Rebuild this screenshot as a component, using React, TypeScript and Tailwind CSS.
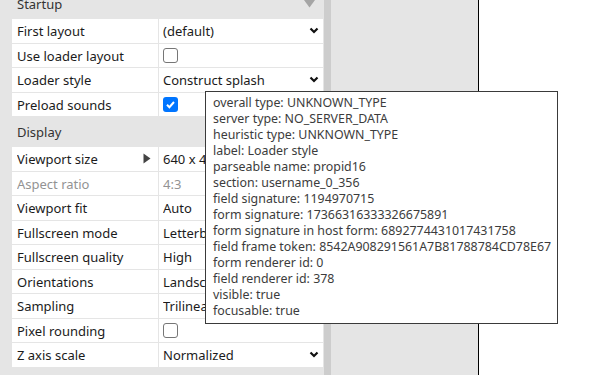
import type { ReactNode } from 'react'

type Row = {
  label: string
  value?: string
  kind?: 'select' | 'check' | 'checked' | 'text' | 'expand'
  muted?: boolean
}

const sections: { title: string; rows: Row[] }[] = [
  {
    title: 'Startup',
    rows: [
      { label: 'First layout', value: '(default)', kind: 'select' },
      { label: 'Use loader layout', kind: 'check' },
      { label: 'Loader style', value: 'Construct splash', kind: 'select' },
      { label: 'Preload sounds', kind: 'checked' },
    ],
  },
  {
    title: 'Display',
    rows: [
      { label: 'Viewport size', value: '640 x 480', kind: 'expand' },
      { label: 'Aspect ratio', value: '4:3', muted: true },
      { label: 'Viewport fit', value: 'Auto', kind: 'select' },
      { label: 'Fullscreen mode', value: 'Letterbox scale', kind: 'select' },
      { label: 'Fullscreen quality', value: 'High', kind: 'select' },
      { label: 'Orientations', value: 'Landscape', kind: 'select' },
      { label: 'Sampling', value: 'Trilinear', kind: 'select' },
      { label: 'Pixel rounding', kind: 'check' },
      { label: 'Z axis scale', value: 'Normalized', kind: 'select' },
    ],
  },
]

const tooltipLines = [
  'overall type: UNKNOWN_TYPE',
  'server type: NO_SERVER_DATA',
  'heuristic type: UNKNOWN_TYPE',
  'label: Loader style',
  'parseable name: propid16',
  'section: username_0_356',
  'field signature: 1194970715',
  'form signature: 17366316333326675891',
  'form signature in host form: 6892774431017431758',
  'field frame token: 8542A908291561A7B81788784CD78E67',
  'form renderer id: 0',
  'field renderer id: 378',
  'visible: true',
  'focusable: true',
]

function Chevron() {
  return (
    <svg width="10" height="7" viewBox="0 0 10 7" className="shrink-0">
      <path d="M1.5 1.5 L5 5 L8.5 1.5" fill="none" stroke="#111" strokeWidth="2.2" />
    </svg>
  )
}

function Checkbox({ checked }: { checked?: boolean }) {
  if (checked) {
    return (
      <div className="w-[15px] h-[15px] rounded-[3px] bg-[#0075ff] flex items-center justify-center">
        <svg width="11" height="11" viewBox="0 0 11 11">
          <path d="M2 5.8 L4.4 8.2 L9 3" fill="none" stroke="#fff" strokeWidth="2" />
        </svg>
      </div>
    )
  }
  return <div className="w-[15px] h-[15px] rounded-[3px] border border-[#767676] bg-white" />
}

function ValueCell({ row }: { row: Row }) {
  let content: ReactNode = null
  if (row.kind === 'check' || row.kind === 'checked') {
    content = <Checkbox checked={row.kind === 'checked'} />
  } else {
    content = (
      <>
        <span className={`flex-1 truncate pt-[2px] ${row.muted ? 'text-[#939393]' : ''}`}>
          {row.value}
        </span>
        {row.kind === 'select' && <Chevron />}
      </>
    )
  }
  return <div className="flex-1 flex items-center pl-[4px] pr-[4px] bg-white">{content}</div>
}

function PropRow({ row }: { row: Row }) {
  return (
    <div className="flex h-[23.5px] mb-px gap-px">
      <div
        className={`w-[146px] flex items-center pl-[5px] pr-[7px] bg-white ${
          row.muted ? 'text-[#939393]' : ''
        }`}
      >
        <span className="flex-1 truncate pt-[2px]">{row.label}</span>
        {row.kind === 'expand' && (
          <svg width="8" height="11" viewBox="0 0 8 11">
            <path d="M0.5 0.5 L7.5 5.5 L0.5 10.5 Z" fill="#444" />
          </svg>
        )}
      </div>
      <ValueCell row={row} />
    </div>
  )
}

export default function App() {
  return (
    <div
      className="relative w-[604px] h-[375px] overflow-hidden bg-white flex text-[13px] text-[#1b1b1b]"
      style={{ fontFamily: '"Noto Sans", "Open Sans", sans-serif' }}
    >
      {/* Properties panel */}
      <div className="w-[479px] h-full shrink-0 bg-[#e5e5e5] border-r border-black flex">
        <div className="w-[324px] h-full overflow-hidden">
          <div className="-mt-[11px] pr-px">
            {sections.map((s) => (
              <div key={s.title}>
                <div className="h-[30px] flex items-center pl-[17px] pr-[8px] text-[#333]">
                  <span className="flex-1 pt-[2px]">{s.title}</span>
                  <svg width="11" height="8" viewBox="0 0 11 8">
                    <path d="M0 0 L11 0 L5.5 7.5 Z" fill="#a5a5a5" />
                  </svg>
                </div>
                <div className="pl-[12px]">
                  {s.rows.map((r) => (
                    <PropRow key={r.label} row={r} />
                  ))}
                </div>
              </div>
            ))}
          </div>
        </div>
        <div className="w-[7px] h-full bg-[#cdcdcd]" />
      </div>

      {/* Field info tooltip */}
      <div className="absolute left-[205px] top-[91px] w-[353px] h-[233px] bg-white border border-[#3a3a3a] pl-[7px] pt-[3px] text-[12.4px] leading-[16px] text-[#3c3c3c]">
        {tooltipLines.map((l) => (
          <div key={l} className="whitespace-nowrap">
            {l}
          </div>
        ))}
      </div>
    </div>
  )
}
